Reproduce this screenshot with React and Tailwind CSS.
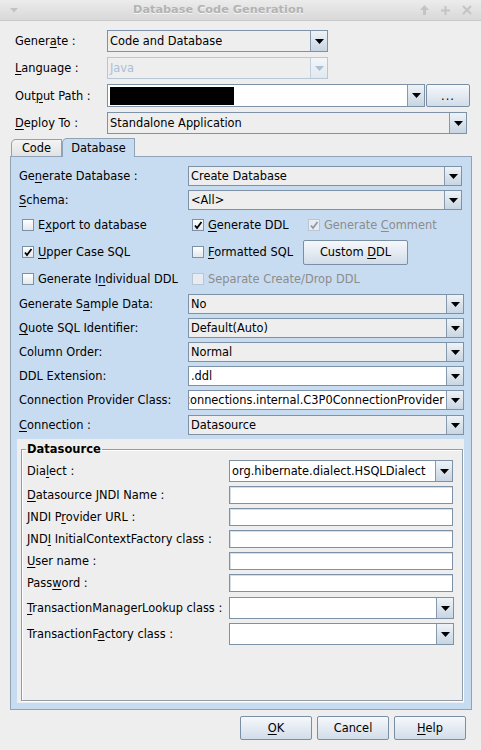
import React from "react";

// libellé avec mnémonique souligné
const mn = (text, i) =>
  i === undefined ? (
    text
  ) : (
    <span className="whitespace-pre">
      {text.slice(0, i)}
      <span className="underline underline-offset-2">{text[i]}</span>
      {text.slice(i + 1)}
    </span>
  );

const Arrow = ({ disabled }) => (
  <div
    className={`w-[17px] shrink-0 border-l flex items-center justify-center bg-linear-to-b ${
      disabled
        ? "border-[#c4d0dc] from-[#f3f6f9] to-[#e2e8ee]"
        : "border-[#8799ac] from-[#eef3f8] to-[#c8d5e2]"
    }`}
  >
    <svg width="9" height="5" viewBox="0 0 9 5">
      <path d="M0 0H9L4.5 5Z" fill={disabled ? "#a9c0d6" : "#000"} />
    </svg>
  </div>
);

const Combo = ({ className, value, editable, disabled, clip, children }) => (
  <div
    className={`flex border ${
      disabled ? "border-[#b9c6d3]" : "border-[#7e92a7]"
    } ${className}`}
  >
    <div
      className={`flex-1 min-w-0 flex items-center overflow-hidden whitespace-nowrap px-[2px] ${
        editable ? "bg-white" : "bg-[#eeeeee]"
      } ${disabled ? "text-[#a9c0d6]" : ""} ${clip ? "justify-end" : ""}`}
    >
      {children ?? value}
    </div>
    <Arrow disabled={disabled} />
  </div>
);

const Field = () => (
  <div className="w-[224px] h-[18px] border border-[#7e92a7] bg-white shadow-[inset_1px_1px_0_#d8dee5]" />
);

const Check = ({ checked, disabled }) => (
  <span
    className={`w-[12px] h-[12px] shrink-0 border flex items-center justify-center ${
      disabled
        ? "border-[#b8c6d4] bg-[#e6ecf2]"
        : "border-[#7d91a6] bg-linear-to-b from-white to-[#e2e8ee]"
    }`}
  >
    {checked && (
      <svg width="10" height="10" viewBox="0 0 10 10">
        <path
          d="M2 5.5L4 8L8.5 2"
          fill="none"
          stroke={disabled ? "#8f9aa5" : "#000"}
          strokeWidth="1.8"
        />
      </svg>
    )}
  </span>
);

const CheckItem = ({ label, checked, disabled, className }) => (
  <div className={`flex items-center gap-[4px] ${className}`}>
    <Check checked={checked} disabled={disabled} />
    <span className={disabled ? "text-[#8c8c8c]" : ""}>{label}</span>
  </div>
);

const Btn = ({ className, children }) => (
  <button
    className={`border border-[#7a8fa5] rounded-[2px] bg-linear-to-b from-[#f6f8fb] to-[#d2dde9] flex items-center justify-center text-black ${className}`}
  >
    {children}
  </button>
);

const TitleBar = () => (
  <div className="h-[21px] shrink-0 flex items-center border-b border-[#c9c9c9] bg-linear-to-b from-[#ececec] to-[#d8d8d8]">
    <svg className="ml-[10px]" width="8" height="5" viewBox="0 0 8 5">
      <path d="M0 0H8L4 4.5Z" fill="#c2c2c2" />
    </svg>
    <div className="flex-1 pl-[115px] font-bold text-[11.3px] text-[#b3b3b3] [text-shadow:0_1px_0_#f4f4f4]">
      Database Code Generation
    </div>
    <div className="flex items-center gap-[12px] pr-[9px]">
      <svg width="9" height="10" viewBox="0 0 9 10">
        <path d="M4.5 0L9 5H6V10H3V5H0Z" fill="#c4c4c4" />
      </svg>
      <svg width="9" height="9" viewBox="0 0 9 9">
        <path d="M3.5 0H5.5V3.5H9V5.5H5.5V9H3.5V5.5H0V3.5H3.5Z" fill="#c4c4c4" />
      </svg>
      <svg width="10" height="10" viewBox="0 0 10 10">
        <path d="M1 1L9 9M9 1L1 9" stroke="#c4c4c4" strokeWidth="2" />
      </svg>
    </div>
  </div>
);

const TopRow = ({ label, className, children }) => (
  <div className={`flex items-center ${className}`}>
    <span className="w-[92px] shrink-0">{label}</span>
    {children}
  </div>
);

const PanelRow = ({ label, className, children }) => (
  <div className={`flex items-center pl-[8px] ${className}`}>
    <span className="w-[169px] shrink-0">{label}</span>
    {children}
  </div>
);

const DsRow = ({ label, className, children }) => (
  <div className={`flex items-center ${className}`}>
    <span className="w-[202px] shrink-0">{label}</span>
    {children}
  </div>
);

export default function App() {
  return (
    <div className="w-[481px] h-[750px] overflow-hidden bg-[#eeeeee] text-[11.4px] leading-[14px] text-black font-['DejaVu_Sans',sans-serif] flex flex-col">
      <TitleBar />

      {/* en-tête */}
      <div className="flex flex-col pl-[15px] pt-[9px]">
        <TopRow label={mn("Generate :", 5)} className="h-[22px]">
          <Combo className="w-[221px] h-[22px]" value="Code and Database" />
        </TopRow>
        <TopRow label={mn("Language :", 0)} className="h-[22px] mt-[5px]">
          <Combo className="w-[221px] h-[22px]" value="Java" disabled />
        </TopRow>
        <TopRow label={mn("Output Path :", 3)} className="h-[23px] mt-[5px]">
          <Combo className="w-[318px] h-[23px]" editable>
            <span className="w-[124px] h-[18px] bg-black" />
          </Combo>
          <Btn className="ml-[1px] w-[44px] h-[23px] text-[#5a2a2a] tracking-[1px]">
            ...
          </Btn>
        </TopRow>
        <TopRow label={mn("Deploy To :", 0)} className="h-[22px] mt-[5px]">
          <Combo className="w-[360px] h-[22px]" value="Standalone Application" />
        </TopRow>
      </div>

      {/* onglets */}
      <div className="ml-[10px] mt-[4px] flex flex-col">
        <div className="flex items-end h-[18px] pl-[1px]">
          <div className="w-[51px] h-[17px] border border-b-0 border-[#8ea3b8] rounded-tl-[5px] bg-linear-to-b from-[#f4f4f4] to-[#e2e2e2] flex items-center justify-center">
            Code
          </div>
          <div className="relative z-10 -mb-[1px] w-[73px] h-[19px] border border-b-0 border-[#8ea3b8] rounded-tl-[5px] bg-[#c8dcf1] flex items-center justify-center pb-[1px]">
            Database
          </div>
        </div>

        <div className="w-[462px] h-[554px] border border-[#8ea3b8] bg-[#c8dcf1] flex flex-col">
          <PanelRow label={mn("Generate Database :", 2)} className="h-[20px] mt-[9px]">
            <Combo className="w-[274px] h-[20px]" value="Create Database" />
          </PanelRow>
          <PanelRow label={mn("Schema:", 0)} className="h-[20px] mt-[4px]">
            <Combo className="w-[274px] h-[20px]" value="<All>" />
          </PanelRow>

          <div className="flex items-center h-[24px] mt-[3px] pl-[11px]">
            <CheckItem className="w-[170px]" label={mn("Export to database", 1)} />
            <CheckItem className="w-[116px]" label={mn("Generate DDL", 0)} checked />
            <CheckItem label={mn("Generate Comment", 9)} checked disabled />
          </div>
          <div className="flex items-center h-[26px] mt-[2px] pl-[11px]">
            <CheckItem className="w-[170px]" label={mn("Upper Case SQL", 0)} checked />
            <CheckItem className="w-[111px]" label={mn("Formatted SQL", 0)} />
            <Btn className="w-[105px] h-[25px]">{mn("Custom DDL", 7)}</Btn>
          </div>
          <div className="flex items-center h-[24px] mt-[2px] pl-[11px]">
            <CheckItem className="w-[170px]" label={mn("Generate Individual DDL", 10)} />
            <CheckItem label="Separate Create/Drop DDL" disabled />
          </div>

          <PanelRow label={mn("Generate Sample Data:", 10)} className="h-[20px] mt-[3px]">
            <Combo className="w-[276px] h-[20px]" value="No" />
          </PanelRow>
          <PanelRow label={mn("Quote SQL Identifier:", 0)} className="h-[20px] mt-[4px]">
            <Combo className="w-[276px] h-[20px]" value="Default(Auto)" />
          </PanelRow>
          <PanelRow label="Column Order:" className="h-[20px] mt-[4px]">
            <Combo className="w-[276px] h-[20px]" value="Normal" />
          </PanelRow>
          <PanelRow label="DDL Extension:" className="h-[20px] mt-[4px]">
            <Combo className="w-[276px] h-[20px]" value=".ddl" editable />
          </PanelRow>
          <PanelRow label="Connection Provider Class:" className="h-[20px] mt-[4px]">
            <Combo
              className="w-[276px] h-[20px]"
              value="connections.internal.C3P0ConnectionProvider"
              editable
              clip
            />
          </PanelRow>
          <PanelRow label={mn("Connection :", 0)} className="h-[20px] mt-[5px]">
            <Combo className="w-[276px] h-[20px]" value="Datasource" />
          </PanelRow>

          {/* groupe Datasource */}
          <div className="mt-[4px] ml-[6px] w-[447px] h-[264px] bg-[#eeeeee] pt-[3px] pl-[4px]">
            <fieldset className="w-[441px] h-[259px] border border-[#8e9cab] shadow-[inset_1px_1px_0_#fff,1px_1px_0_#fff] pl-[5px] pr-[8px] flex flex-col">
              <legend className="font-bold text-[11.5px] px-[1px] -ml-[1px]">Datasource</legend>
              <DsRow label={mn("Dialect :", 3)} className="h-[22px] mt-[4px]">
                <Combo className="w-[224px] h-[22px]" value="org.hibernate.dialect.HSQLDialect" editable />
              </DsRow>
              <DsRow label={mn("Datasource JNDI Name :", 0)} className="h-[22px] mt-[2px]">
                <Field />
              </DsRow>
              <DsRow label={mn("JNDI Provider URL :", 6)} className="h-[22px]">
                <Field />
              </DsRow>
              <DsRow label={mn("JNDI InitialContextFactory class :", 3)} className="h-[22px]">
                <Field />
              </DsRow>
              <DsRow label={mn("User name :", 0)} className="h-[22px]">
                <Field />
              </DsRow>
              <DsRow label={mn("Password :", 4)} className="h-[22px]">
                <Field />
              </DsRow>
              <DsRow label={mn("TransactionManagerLookup class :", 0)} className="h-[22px] mt-[3px]">
                <Combo className="w-[225px] h-[22px]" editable />
              </DsRow>
              <DsRow label={mn("TransactionFactory class :", 12)} className="h-[22px] mt-[4px]">
                <Combo className="w-[225px] h-[22px]" editable />
              </DsRow>
            </fieldset>
          </div>
        </div>
      </div>

      {/* boutons */}
      <div className="flex justify-end gap-[5px] pr-[15px] mt-[6px]">
        <Btn className="w-[72px] h-[24px]">{mn("OK", 0)}</Btn>
        <Btn className="w-[72px] h-[24px]">Cancel</Btn>
        <Btn className="w-[72px] h-[24px]">{mn("Help", 0)}</Btn>
      </div>
    </div>
  );
}
